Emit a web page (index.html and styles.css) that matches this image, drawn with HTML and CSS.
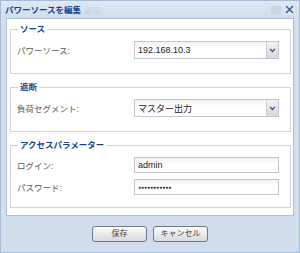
FILE: index.html
```html
<!DOCTYPE html>
<html lang="ja">
<head>
<meta charset="utf-8">
<title>パワーソースを編集</title>
<link rel="stylesheet" href="styles.css">
</head>
<body>
<div class="window">
  <div class="titlebar">
    <span class="title">パワーソースを編集</span><span class="ghost">編集</span>
    <span class="tools">
      <span class="tool-ghost"></span>
      <span class="tool-close">
        <svg width="9" height="9" viewBox="0 0 9 9"><path d="M1.5 1.5 L7.5 7.5 M7.5 1.5 L1.5 7.5" stroke="#2f5f9e" stroke-width="1.6" stroke-linecap="round"/></svg>
      </span>
    </span>
  </div>
  <div class="panel">
    <fieldset class="fs fs-source">
      <legend>ソース</legend>
      <div class="row">
        <label class="lbl">パワーソース:</label>
        <div class="combo"><span class="val">192.168.10.3</span><span class="trigger"><svg width="7" height="5" viewBox="0 0 7 5"><path d="M1 1 L3.5 3.5 L6 1" fill="none" stroke="#3a5e8c" stroke-width="1.4"/></svg></span></div>
      </div>
    </fieldset>
    <fieldset class="fs fs-cut">
      <legend>遮断</legend>
      <div class="row">
        <label class="lbl">負荷セグメント:</label>
        <div class="combo"><span class="val">マスター出力</span><span class="trigger"><svg width="7" height="5" viewBox="0 0 7 5"><path d="M1 1 L3.5 3.5 L6 1" fill="none" stroke="#3a5e8c" stroke-width="1.4"/></svg></span></div>
      </div>
    </fieldset>
    <fieldset class="fs fs-access">
      <legend>アクセスパラメーター</legend>
      <div class="row">
        <label class="lbl">ログイン:</label>
        <div class="text">admin</div>
      </div>
      <div class="row">
        <label class="lbl">パスワード:</label>
        <div class="text dots">●●●●●●●●●●●</div>
      </div>
    </fieldset>
  </div>
  <div class="footer">
    <button class="btn">保存</button>
    <button class="btn">キャンセル</button>
  </div>
</div>
</body>
</html>
```

FILE: styles.css
```css
html, body {
  margin: 0;
  padding: 0;
  background: #ffffff;
}
body {
  font-family: "Liberation Sans", "Noto Sans CJK JP", sans-serif;
  font-size: 9px;
}
.window {
  width: 300px;
  height: 253px;
  box-sizing: border-box;
  border: 1px solid #a6bcd6;
  background: #d2ddeb;
  padding: 0 5px;
  display: flex;
  flex-direction: column;
}
.titlebar {
  height: 17px;
  display: flex;
  align-items: center;
  background: linear-gradient(#dfe8f3, #d2ddeb);
  margin: 0 -5px;
  padding: 0 5px 0 4px;
}
.title {
  font-weight: bold;
  color: #15428b;
  font-size: 8.5px;
  line-height: 12px;
}
.ghost {
  color: #c8d3e1;
  font-size: 8.5px;
  margin-left: 3px;
}
.tools {
  margin-left: auto;
  display: flex;
  align-items: center;
  gap: 4px;
}
.tool-ghost {
  width: 10px;
  height: 8px;
  background: #cbd5e2;
  border-radius: 1px;
}
.tool-close {
  width: 9px;
  height: 9px;
  display: flex;
  background: #dfe7f2;
}
.panel {
  height: 198px;
  box-sizing: border-box;
  background: #ffffff;
  border: 1px solid #a9bfd8;
  padding: 4px 2px 0 3px;
}
.fs {
  margin: 0 0 7px 0;
  border: 1px solid #d0d3da;
  padding: 6px 11px 0 6px;
}
.fs legend {
  font-weight: bold;
  color: #15428b;
  font-size: 8.5px;
  line-height: 12px;
  padding: 0 2px;
  margin-left: 1px;
}
.fs-source { padding-bottom: 14px; }
.fs-cut { padding-bottom: 14px; }
.fs-access { padding-bottom: 12px; }
.row {
  display: flex;
  align-items: center;
}
.row + .row { margin-top: 6px; }
.lbl {
  width: 117px;
  color: #5a5a5a;
  font-size: 8.5px;
}
.combo {
  width: 145px;
  height: 18px;
  box-sizing: border-box;
  border: 1px solid #c4c6cf;
  background: linear-gradient(#f1f1f1, #ffffff 40%);
  display: flex;
  align-items: center;
}
.combo .val {
  flex: 1;
  padding-left: 3px;
  color: #222222;
}
.trigger {
  width: 12px;
  height: 16px;
  box-sizing: border-box;
  border-left: 1px solid #c9ccd3;
  background: linear-gradient(#f2f2f2, #d6d8dc);
  display: flex;
  align-items: center;
  justify-content: center;
}
.text {
  width: 145px;
  height: 16px;
  box-sizing: border-box;
  border: 1px solid #c4c6cf;
  background: linear-gradient(#f1f1f1, #ffffff 40%);
  padding-left: 3px;
  line-height: 14px;
  color: #222222;
}
.dots {
  font-size: 5px;
  letter-spacing: 0;
  color: #333333;
}
.footer {
  flex: 1;
  display: flex;
  justify-content: center;
  align-items: flex-start;
  padding-top: 10px;
  gap: 6px;
}
.btn {
  width: 55px;
  height: 16px;
  box-sizing: border-box;
  border: 1px solid #6f7a86;
  border-radius: 3px;
  background: linear-gradient(#fbfbfb, #e4e6e9 60%, #d9dce0);
  font-family: "Liberation Sans", "Noto Sans CJK JP", sans-serif;
  font-size: 8px;
  color: #444444;
  padding: 0;
  line-height: 14px;
}
```
